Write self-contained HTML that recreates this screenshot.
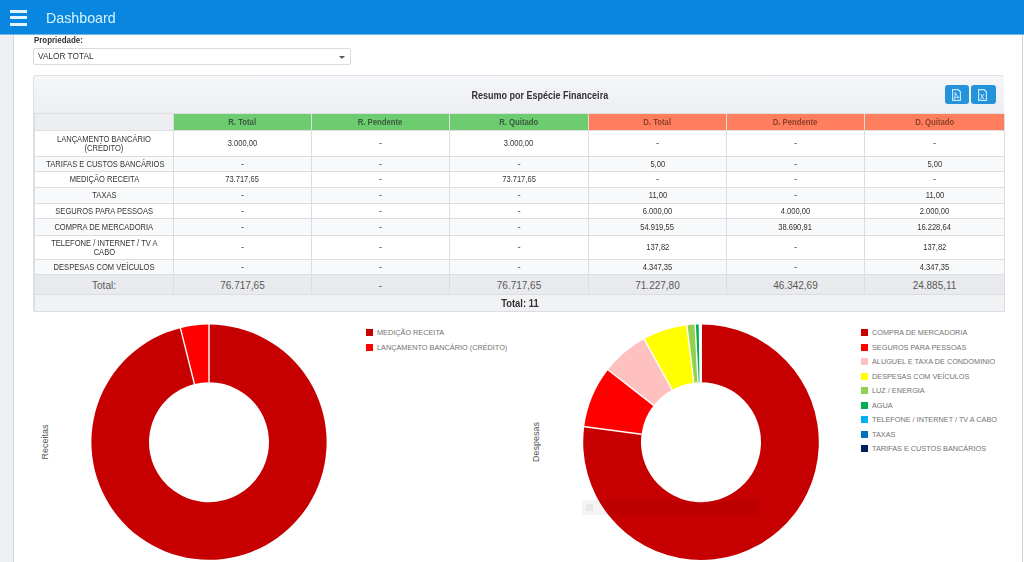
<!DOCTYPE html>
<html><head><meta charset="utf-8">
<style>
*{box-sizing:border-box;margin:0;padding:0}
html,body{width:1024px;height:562px;overflow:hidden;background:#fff;font-family:"Liberation Sans",sans-serif;color:#333}
#hdr{position:absolute;left:0;top:0;width:1024px;height:35px;background:linear-gradient(#0987e0 34px,#6fb8ec 34px);z-index:2}
#hdr .bar{position:absolute;left:10px;width:17px;height:3px;background:#dff4ff}
#hdr .title{position:absolute;left:46px;top:9px;font-size:15px;color:#d8f3ff;line-height:18px;transform:scaleX(0.95);transform-origin:0 50%}
#side{position:absolute;left:0;top:34px;width:14px;height:528px;background:#eef0f4;border-right:1px solid #d3d6db}
#rside{position:absolute;left:1022px;top:34px;width:1px;height:528px;background:#cfd2d6}
#lbl{position:absolute;left:34px;top:35px;font-size:8.6px;font-weight:bold;color:#333;line-height:10px}
#sel{position:absolute;left:33px;top:48px;width:318px;height:17px;border:1px solid #d9dce0;border-radius:2px;background:#fff;font-size:9px;line-height:15px;padding-left:4px;color:#333}
.sx{display:inline-block;transform:scaleX(0.92);transform-origin:0 50%;white-space:nowrap}
.sc{display:inline-block;transform:scaleX(0.86);white-space:nowrap}
td .sc{transform:scaleX(0.84)}
#ptitle .sc{transform:scaleX(0.9)}
#lbl .sx{transform:scaleX(0.92)}
#sel .caret{position:absolute;right:5px;top:7px;width:0;height:0;border-left:3px solid transparent;border-right:3px solid transparent;border-top:3px solid #555}
#panel{position:absolute;left:33px;top:75px;width:971px;height:237px;border:1px solid #dcdfe3;background:#f1f2f4;border-radius:2px}
#ptitle{position:absolute;left:0;top:0;width:970px;height:38px;background:linear-gradient(#f5f6f8,#eceef1);border-bottom:1px solid #dddfe3}
#ptitle .t{position:absolute;left:21px;width:100%;top:14px;text-align:center;font-size:10px;line-height:12px;font-weight:bold;color:#333}
.btn{position:absolute;top:9px;width:24px;height:19px;background:#2493dc;border-radius:3px}
.btn svg{position:absolute;left:7px;top:4px}
table{position:absolute;left:0;top:38px;border-collapse:collapse;table-layout:fixed;width:970px}
td,th{font-size:9px;text-align:center;color:#333;border:1px solid #dcdde1;font-weight:normal;line-height:9px;padding:1px 0 0 0}
th{height:16px;font-weight:bold;border-top:0}
th.g{background:#6ccc6f;color:#3b5a3f}
th.o{background:#fe7e5d;color:#8f3d2a}
th.e{background:#eceef1}
tr.r td{background:#fff}
tr.a td{background:#f8f9fa}
tr.tot td{background:#e9eaed;font-size:10px;color:#585858;height:20px;padding-top:2px}
tr.tot2 td{background:#f1f2f4;font-size:10px;font-weight:bold;height:17px;color:#333}
#charts{position:absolute;left:0;top:0}
.leg{position:absolute;font-size:7.3px;color:#737373;line-height:9px;white-space:nowrap}
.leg i{position:absolute;left:-11px;top:1px;width:7px;height:7px}
.ylab{position:absolute;font-size:9px;color:#555;transform:rotate(-90deg);transform-origin:50% 50%;white-space:nowrap;line-height:10px}
#tip{position:absolute;left:582px;top:500px;width:177px;height:15px;background:rgba(0,0,0,0.045);border-radius:2px}
#tip span{position:absolute;left:25px;top:4px;font-size:8px;font-weight:bold;color:rgba(0,0,0,0.045);letter-spacing:0.1px;line-height:8px;white-space:nowrap;filter:blur(0.3px)}
#tip i{position:absolute;left:4px;top:4px;width:7px;height:7px;background:rgba(0,0,0,0.05)}
</style></head><body>
<svg id="charts" width="1024" height="562" viewBox="0 0 1024 562">
<path d="M209.00,324.60A117.6,117.6 0 1 1 180.40,328.13L194.41,384.00A60,60 0 1 0 209.00,382.20Z" fill="#c60000"/>
<path d="M180.40,328.13A117.6,117.6 0 0 1 209.00,324.60L209.00,382.20A60,60 0 0 0 194.41,384.00Z" fill="#ff0000"/>
<line x1="209.00" y1="382.20" x2="209.00" y2="323.60" stroke="#fff" stroke-width="1.4"/>
<line x1="194.41" y1="384.00" x2="180.15" y2="327.16" stroke="#fff" stroke-width="1.4"/>
<path d="M701.00,324.40A117.8,117.8 0 1 1 584.23,426.67L641.52,434.29A60,60 0 1 0 701.00,382.20Z" fill="#c60000"/>
<path d="M584.23,426.67A117.8,117.8 0 0 1 608.05,369.84L653.65,405.34A60,60 0 0 0 641.52,434.29Z" fill="#ff0000"/>
<path d="M608.05,369.84A117.8,117.8 0 0 1 644.16,339.02L672.05,389.65A60,60 0 0 0 653.65,405.34Z" fill="#ffc0c0"/>
<path d="M644.16,339.02A117.8,117.8 0 0 1 686.89,325.25L693.81,382.63A60,60 0 0 0 672.05,389.65Z" fill="#ffff00"/>
<path d="M686.89,325.25A117.8,117.8 0 0 1 695.17,324.54L698.03,382.27A60,60 0 0 0 693.81,382.63Z" fill="#92d050"/>
<path d="M695.17,324.54A117.8,117.8 0 0 1 699.40,324.41L700.19,382.21A60,60 0 0 0 698.03,382.27Z" fill="#00b050"/>
<path d="M699.40,324.41A117.8,117.8 0 0 1 700.83,324.40L700.92,382.20A60,60 0 0 0 700.19,382.21Z" fill="#00b0f0"/>
<path d="M700.83,324.40A117.8,117.8 0 0 1 700.95,324.40L700.97,382.20A60,60 0 0 0 700.92,382.20Z" fill="#0070c0"/>
<path d="M700.95,324.40A117.8,117.8 0 0 1 701.00,324.40L701.00,382.20A60,60 0 0 0 700.97,382.20Z" fill="#002060"/>
<line x1="701.00" y1="382.20" x2="701.00" y2="323.40" stroke="#fff" stroke-width="1.4"/>
<line x1="641.52" y1="434.29" x2="583.24" y2="426.54" stroke="#fff" stroke-width="1.4"/>
<line x1="653.65" y1="405.34" x2="607.26" y2="369.22" stroke="#fff" stroke-width="1.4"/>
<line x1="672.05" y1="389.65" x2="643.68" y2="338.15" stroke="#fff" stroke-width="1.4"/>
<line x1="693.81" y1="382.63" x2="686.77" y2="324.26" stroke="#fff" stroke-width="1.4"/>
<line x1="698.03" y1="382.27" x2="695.12" y2="323.55" stroke="#fff" stroke-width="1.4"/>
<line x1="700.19" y1="382.21" x2="699.39" y2="323.41" stroke="#fff" stroke-width="1.4"/>
<line x1="700.92" y1="382.20" x2="700.83" y2="323.40" stroke="#fff" stroke-width="1.4"/>
<line x1="700.97" y1="382.20" x2="700.95" y2="323.40" stroke="#fff" stroke-width="1.4"/>

</svg>
<div id="hdr">
  <div class="bar" style="top:10px"></div>
  <div class="bar" style="top:16px"></div>
  <div class="bar" style="top:23px"></div>
  <div class="title">Dashboard</div>
</div>
<div id="side"></div>
<div id="rside"></div>
<div id="lbl"><span class="sx">Propriedade:</span></div>
<div id="sel"><span class="sx">VALOR TOTAL</span><span class="caret"></span></div>
<div id="panel">
  <div id="ptitle"><div class="t"><span class="sc">Resumo por Espécie Financeira</span></div>
    <div class="btn" style="left:911px"><svg width="9" height="12" viewBox="0 0 9 12"><path d="M0.5,0.5H6L8.5,3V11.5H0.5Z" fill="none" stroke="#c5e9fd" stroke-width="1.3"/><path d="M3,3.5Q4,7 2,9.5Q4.5,7.5 7,8.5Q4.5,6.5 3,3.5" fill="none" stroke="#c5e9fd" stroke-width="1"/></svg></div>
    <div class="btn" style="left:937px;width:25px"><svg width="9" height="12" viewBox="0 0 9 12"><path d="M0.5,0.5H6L8.5,3V11.5H0.5Z" fill="none" stroke="#c5e9fd" stroke-width="1.3"/><path d="M2.5,5L6,10M6,5L2.5,10" fill="none" stroke="#c5e9fd" stroke-width="1"/></svg></div>
  </div>
  <table>
    <colgroup><col style="width:139px"><col style="width:138px"><col style="width:138px"><col style="width:139px"><col style="width:138px"><col style="width:138px"><col style="width:140px"></colgroup>
    <tr><th class="e"></th><th class="g"><span class="sc">R. Total</span></th><th class="g"><span class="sc">R. Pendente</span></th><th class="g"><span class="sc">R. Quitado</span></th><th class="o"><span class="sc">D. Total</span></th><th class="o"><span class="sc">D. Pendente</span></th><th class="o"><span class="sc">D. Quitado</span></th></tr>
    <tr class="r" style="height:26px"><td><span class="sc">LANÇAMENTO BANCÁRIO<br>(CRÉDITO)</span></td><td><span class="sc">3.000,00</span></td><td>-</td><td><span class="sc">3.000,00</span></td><td>-</td><td>-</td><td>-</td></tr>
    <tr class="a" style="height:15px"><td><span class="sc">TARIFAS E CUSTOS BANCÁRIOS</span></td><td>-</td><td>-</td><td>-</td><td><span class="sc">5,00</span></td><td>-</td><td><span class="sc">5,00</span></td></tr>
    <tr class="r" style="height:16px"><td><span class="sc">MEDIÇÃO RECEITA</span></td><td><span class="sc">73.717,65</span></td><td>-</td><td><span class="sc">73.717,65</span></td><td>-</td><td>-</td><td>-</td></tr>
    <tr class="a" style="height:16px"><td><span class="sc">TAXAS</span></td><td>-</td><td>-</td><td>-</td><td><span class="sc">11,00</span></td><td>-</td><td><span class="sc">11,00</span></td></tr>
    <tr class="r" style="height:15px"><td><span class="sc">SEGUROS PARA PESSOAS</span></td><td>-</td><td>-</td><td>-</td><td><span class="sc">6.000,00</span></td><td><span class="sc">4.000,00</span></td><td><span class="sc">2.000,00</span></td></tr>
    <tr class="a" style="height:17px"><td><span class="sc">COMPRA DE MERCADORIA</span></td><td>-</td><td>-</td><td>-</td><td><span class="sc">54.919,55</span></td><td><span class="sc">38.690,91</span></td><td><span class="sc">16.228,64</span></td></tr>
    <tr class="r" style="height:24px"><td><span class="sc">TELEFONE / INTERNET / TV A<br>CABO</span></td><td>-</td><td>-</td><td>-</td><td><span class="sc">137,82</span></td><td>-</td><td><span class="sc">137,82</span></td></tr>
    <tr class="a" style="height:15px"><td><span class="sc">DESPESAS COM VEÍCULOS</span></td><td>-</td><td>-</td><td>-</td><td><span class="sc">4.347,35</span></td><td>-</td><td><span class="sc">4.347,35</span></td></tr>
    <tr class="tot"><td>Total:</td><td>76.717,65</td><td>-</td><td>76.717,65</td><td>71.227,80</td><td>46.342,69</td><td>24.885,11</td></tr>
    <tr class="tot2"><td colspan="7"><span class="sc" style="transform:scaleX(0.94)">Total: 11</span></td></tr>
  </table>
</div>
<div class="ylab" style="left:25px;top:437px;width:40px;text-align:center">Receitas</div>
<div class="ylab" style="left:516px;top:437px;width:40px;text-align:center">Despesas</div>
<div class="leg" style="left:377px;top:328px"><i style="background:#c60000"></i>MEDIÇÃO RECEITA</div>
<div class="leg" style="left:377px;top:342.5px"><i style="background:#ff0000"></i>LANÇAMENTO BANCÁRIO (CRÉDITO)</div>
<div class="leg" style="left:872px;top:328px"><i style="background:#c60000"></i>COMPRA DE MERCADORIA</div>
<div class="leg" style="left:872px;top:342.5px"><i style="background:#ff0000"></i>SEGUROS PARA PESSOAS</div>
<div class="leg" style="left:872px;top:357px"><i style="background:#ffc0c0"></i>ALUGUEL E TAXA DE CONDOMINIO</div>
<div class="leg" style="left:872px;top:371.5px"><i style="background:#ffff00"></i>DESPESAS COM VEÍCULOS</div>
<div class="leg" style="left:872px;top:386px"><i style="background:#92d050"></i>LUZ / ENERGIA</div>
<div class="leg" style="left:872px;top:400.5px"><i style="background:#00b050"></i>AGUA</div>
<div class="leg" style="left:872px;top:415px"><i style="background:#00b0f0"></i>TELEFONE / INTERNET / TV A CABO</div>
<div class="leg" style="left:872px;top:429.5px"><i style="background:#0070c0"></i>TAXAS</div>
<div class="leg" style="left:872px;top:444px"><i style="background:#002060"></i>TARIFAS E CUSTOS BANCÁRIOS</div>
<div id="tip"><i></i><span>COMPRA DE MERCADORIA: 54919,55</span></div>
</body></html>
